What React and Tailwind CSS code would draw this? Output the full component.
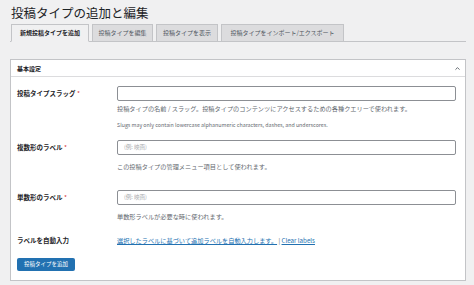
import { ChevronUp } from "lucide-react";

const tabs = [
  { t: "新規投稿タイプを追加", w: "w-[78px]" },
  { t: "投稿タイプを編集", w: "w-[61px]" },
  { t: "投稿タイプを表示", w: "w-[62px]" },
  { t: "投稿タイプをインポート/エクスポート", w: "w-[123px]" },
];

function Row({ label, required, placeholder, children, className = "" }) {
  return (
    <div className={`flex ${className}`}>
      <div className="w-[100px] shrink-0 pt-[3px] text-[6.5px] font-bold text-[#1d2327]">
        {label}
        {required && <span className="text-[#d63638] font-normal"> *</span>}
      </div>
      <div className="flex-1">
        <div className="h-[15px] w-[339px] rounded-[2px] border border-[#8c8f94] bg-white px-[6px] text-[5.5px] leading-[13px] text-[#a7aaad]">
          {placeholder}
        </div>
        {children}
      </div>
    </div>
  );
}

export default function App() {
  return (
    <div
      className="h-[285px] w-[474px] overflow-hidden bg-[#f0f0f1] pl-[10px] pr-[8px]"
      style={{ fontFamily: '"Noto Sans CJK JP", "Noto Sans", sans-serif' }}
    >
      <h1 className="pt-[4px] pl-[1px] text-[12.5px] leading-[17px] text-[#1d2327]">投稿タイプの追加と編集</h1>

      {/* tabs */}
      <div className="mt-[3px] flex gap-[3px] border-b border-[#c3c4c7] pl-[1px]">
        {tabs.map(({ t, w }, i) => (
          <div
            key={t}
            className={`-mb-px h-[18px] whitespace-nowrap border border-[#c3c4c7] text-center text-[6px] leading-[16px] ${w} ${
              i === 0 ? "border-b-[#f0f0f1] bg-[#f0f0f1] font-bold text-[#1d2327]" : "bg-[#dcdcde] text-[#50575e]"
            }`}
          >
            {t}
          </div>
        ))}
      </div>

      {/* panel */}
      <div className="mt-[17px] w-[456px] border border-[#c3c4c7] bg-white">
        <div className="flex h-[17px] items-center justify-between border-b border-[#dcdcde] pl-[6px] pr-[4px]">
          <span className="text-[6px] font-bold text-[#1d2327]">基本設定</span>
          <ChevronUp size={7} strokeWidth={3} className="text-[#50575e]" />
        </div>

        <div className="px-[6px] pt-[9px] pb-[9px]">
          <Row label="投稿タイプスラッグ" required>
            <p className="mt-[3px] text-[6.2px] leading-[9px] text-[#646970]">
              投稿タイプの名前 / スラッグ。投稿タイプのコンテンツにアクセスするための各種クエリーで使われます。
            </p>
            <p className="mt-[8px] text-[5.3px] leading-[9px] text-[#646970]">
              Slugs may only contain lowercase alphanumeric characters, dashes, and underscores.
            </p>
          </Row>

          <Row label="複数形のラベル" required placeholder="(例: 映画)" className="mt-[10px]">
            <p className="mt-[7px] text-[6.2px] leading-[9px] text-[#646970]">
              この投稿タイプの管理メニュー項目として使われます。
            </p>
          </Row>

          <Row label="単数形のラベル" required placeholder="(例: 映画)" className="mt-[19px]">
            <p className="mt-[7px] text-[6.2px] leading-[9px] text-[#646970]">単数形ラベルが必要な時に使われます。</p>
          </Row>

          <div className="mt-[15px] flex items-center">
            <div className="w-[100px] shrink-0 text-[6.5px] font-bold text-[#1d2327]">ラベルを自動入力</div>
            <div className="text-[6.2px] text-[#2271b1]">
              <span className="underline">選択したラベルに基づいて追加ラベルを自動入力します。</span>
              <span className="text-[#646970]"> | </span>
              <span className="underline">Clear labels</span>
            </div>
          </div>

          <button className="mt-[12px] h-[13px] w-[58px] rounded-[2px] bg-[#2271b1] text-[5.5px] leading-[13px] text-white">
            投稿タイプを追加
          </button>
        </div>
      </div>
    </div>
  );
}
